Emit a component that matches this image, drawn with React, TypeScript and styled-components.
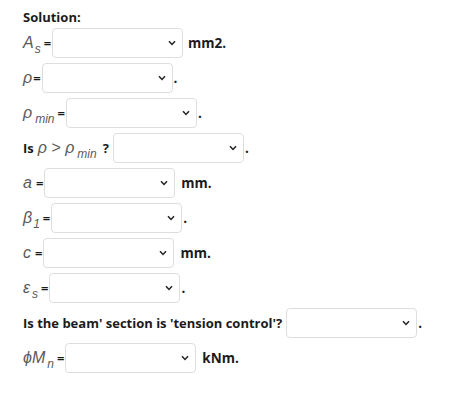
import React from 'react';
import styled, { createGlobalStyle } from 'styled-components';

const GlobalStyle = createGlobalStyle`
    body {
        margin: 8px;
        background: #ffffff;
        font-family: "Open Sans", "Liberation Sans", sans-serif;
        color: #1b1b1b;
    }
`;

const Sheet = styled.div`
    display: flex;
    flex-direction: column;
    gap: 5px;
    padding-left: 15px;
`;

const Heading = styled.div`
    font-size: 13px;
    font-weight: 700;
    line-height: 18px;
    margin-bottom: -3px;
`;

const Row = styled.div`
    display: flex;
    align-items: center;
    height: 30px;
    font-size: 13px;
    font-weight: 700;
    white-space: nowrap;
`;

const Math = styled.span<{ $gap?: number }>`
    font-family: "Liberation Sans", "DejaVu Sans", sans-serif;
    font-style: italic;
    font-weight: 400;
    font-size: 16px;
    color: #5a5a5a;
    margin-right: ${(p) => p.$gap ?? 0}px;
`;

const Sub = styled.sub<{ $space?: number }>`
    font-size: 12px;
    vertical-align: -5px;
    line-height: 0;
    margin-left: ${(p) => p.$space ?? 1}px;
`;

const Upright = styled.span`
    font-style: normal;
`;

const Eq = styled.span`
    font-weight: 700;
    margin-right: 1px;
`;

const Label = styled.span`
    margin-right: 4px;
`;

const SelectWrap = styled.div`
    position: relative;
    width: 131px;
    height: 30px;
`;

const Select = styled.select`
    appearance: none;
    width: 100%;
    height: 100%;
    margin: 0;
    padding: 0 24px 0 8px;
    border: 1px solid #dedede;
    border-radius: 4px;
    background: #ffffff;
    font-family: inherit;
    font-size: 13px;
    color: #1b1b1b;
    box-sizing: border-box;
`;

const Chevron = styled.svg`
    position: absolute;
    right: 7px;
    top: 12px;
    width: 8px;
    height: 6px;
    pointer-events: none;
`;

const Unit = styled.span<{ $gap?: number }>`
    font-size: 13.5px;
    margin-left: ${(p) => p.$gap ?? 4}px;
`;

function Dropdown() {
    return (
        <SelectWrap>
            <Select defaultValue="">
                <option value=""></option>
            </Select>
            <Chevron viewBox="0 0 8 6">
                <path d="M1 1.2 L4 4.4 L7 1.2" fill="none" stroke="#222" strokeWidth="1.5" />
            </Chevron>
        </SelectWrap>
    );
}

export default function App() {
    return (
        <>
            <GlobalStyle />
            <Sheet>
                <Heading>Solution:</Heading>
                <Row>
                    <Math $gap={3}>
                        A<Sub>s</Sub>
                    </Math>
                    <Eq>=</Eq>
                    <Dropdown />
                    <Unit $gap={5}>mm2.</Unit>
                </Row>
                <Row>
                    <Math $gap={1}>ρ</Math>
                    <Eq>=</Eq>
                    <Dropdown />
                    <Unit $gap={1}>.</Unit>
                </Row>
                <Row>
                    <Math $gap={3}>
                        ρ<Sub $space={3}>min</Sub>
                    </Math>
                    <Eq>=</Eq>
                    <Dropdown />
                    <Unit $gap={1}>.</Unit>
                </Row>
                <Row>
                    <Label>Is</Label>
                    <Math $gap={6}>
                        ρ <Upright>&gt;</Upright> ρ<Sub $space={3}>min</Sub>
                    </Math>
                    <Label>?</Label>
                    <Dropdown />
                    <Unit $gap={1}>.</Unit>
                </Row>
                <Row>
                    <Math $gap={4}>a</Math>
                    <Eq>=</Eq>
                    <Dropdown />
                    <Unit $gap={6}>mm.</Unit>
                </Row>
                <Row>
                    <Math $gap={3}>
                        β<Sub>1</Sub>
                    </Math>
                    <Eq>=</Eq>
                    <Dropdown />
                    <Unit $gap={1}>.</Unit>
                </Row>
                <Row>
                    <Math $gap={4}>c</Math>
                    <Eq>=</Eq>
                    <Dropdown />
                    <Unit $gap={6}>mm.</Unit>
                </Row>
                <Row>
                    <Math $gap={3}>
                        ε<Sub $space={2}>s</Sub>
                    </Math>
                    <Eq>=</Eq>
                    <Dropdown />
                    <Unit $gap={1}>.</Unit>
                </Row>
                <Row>
                    <Label>Is the beam' section is 'tension control'?</Label>
                    <Dropdown />
                    <Unit $gap={1}>.</Unit>
                </Row>
                <Row>
                    <Math $gap={3}>
                        ϕM<Sub $space={2}>n</Sub>
                    </Math>
                    <Eq>=</Eq>
                    <Dropdown />
                    <Unit $gap={6}>kNm.</Unit>
                </Row>
            </Sheet>
        </>
    );
}
